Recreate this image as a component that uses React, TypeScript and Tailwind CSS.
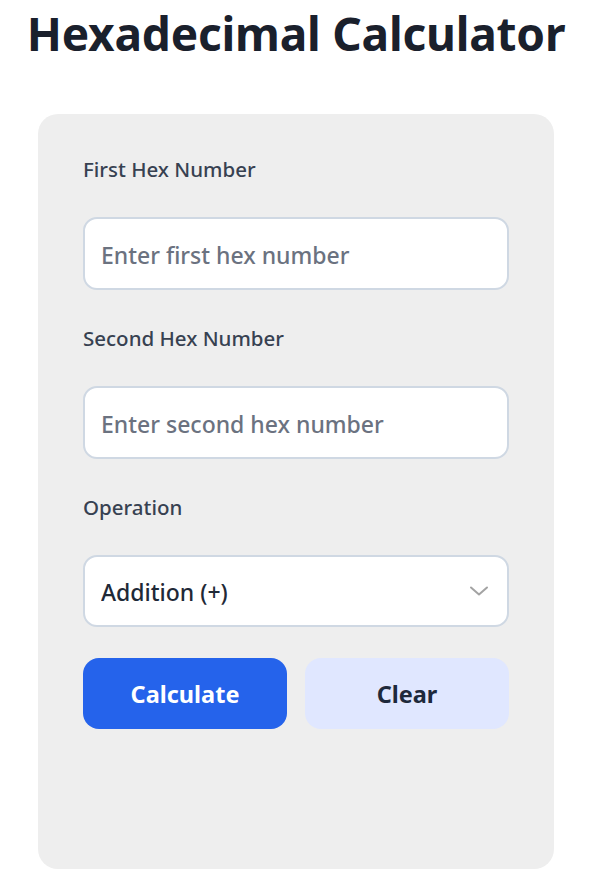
import { useState } from 'react';

const font = { fontFamily: '"Noto Sans", "Open Sans", sans-serif' };

export default function App() {
    const [first, setFirst] = useState('');
    const [second, setSecond] = useState('');
    const [op, setOp] = useState('add');

    return (
        <div className="min-h-screen bg-white flex flex-col items-center pr-[8px]" style={font}>
            <h1 className="text-[46px] leading-none font-bold text-[#1a202c] mt-[10px] tracking-[-0.2px] whitespace-nowrap">
                Hexadecimal Calculator
            </h1>

            <div className="mt-[58px] w-[516px] h-[755px] bg-[#eeeeee] rounded-[20px] px-[45px] pt-[42px]">
                {/* inputs */}
                <label className="block text-[20.5px] leading-[26px] font-medium text-[#374151]">
                    First Hex Number
                </label>
                <input
                    value={first}
                    onChange={(e) => setFirst(e.target.value)}
                    placeholder="Enter first hex number"
                    className="mt-[35px] block w-full h-[73px] bg-white border-2 border-[#cfd8e3] rounded-[14px] px-[16px] pt-[3px] text-[23px] font-medium text-[#1f2937] placeholder:text-[#6b7280] outline-none"
                />

                <label className="block mt-[35px] text-[20.5px] leading-[26px] font-medium text-[#374151]">
                    Second Hex Number
                </label>
                <input
                    value={second}
                    onChange={(e) => setSecond(e.target.value)}
                    placeholder="Enter second hex number"
                    className="mt-[35px] block w-full h-[73px] bg-white border-2 border-[#cfd8e3] rounded-[14px] px-[16px] pt-[3px] text-[23px] font-medium text-[#1f2937] placeholder:text-[#6b7280] outline-none"
                />

                <label className="block mt-[35px] text-[20.5px] leading-[26px] font-medium text-[#374151]">
                    Operation
                </label>
                <div className="relative mt-[35px]">
                    <select
                        value={op}
                        onChange={(e) => setOp(e.target.value)}
                        className="appearance-none block w-full h-[72px] bg-white border-2 border-[#cfd8e3] rounded-[14px] px-[16px] pt-[3px] text-[23px] font-medium text-[#1f2937] outline-none"
                    >
                        <option value="add">Addition (+)</option>
                        <option value="sub">Subtraction (-)</option>
                        <option value="mul">Multiplication (×)</option>
                        <option value="div">Division (÷)</option>
                    </select>
                    <svg className="absolute right-[18px] top-1/2 -translate-y-1/2 pointer-events-none" width="24" height="24" viewBox="0 0 24 24" fill="none" stroke="#a3a3a3" strokeWidth="2" strokeLinecap="round" strokeLinejoin="round">
                        <path d="M4 8.5l8 7 8-7" />
                    </svg>
                </div>

                {/* buttons */}
                <div className="grid grid-cols-2 gap-[18px] mt-[31px]">
                    <button className="h-[71px] rounded-[16px] bg-[#2563eb] text-white text-[23.5px] font-bold pt-[2px]">
                        Calculate
                    </button>
                    <button
                        onClick={() => { setFirst(''); setSecond(''); }}
                        className="h-[71px] rounded-[16px] bg-[#e0e7ff] text-[#1e293b] text-[23.5px] font-bold pt-[2px]"
                    >
                        Clear
                    </button>
                </div>
            </div>
        </div>
    );
}
